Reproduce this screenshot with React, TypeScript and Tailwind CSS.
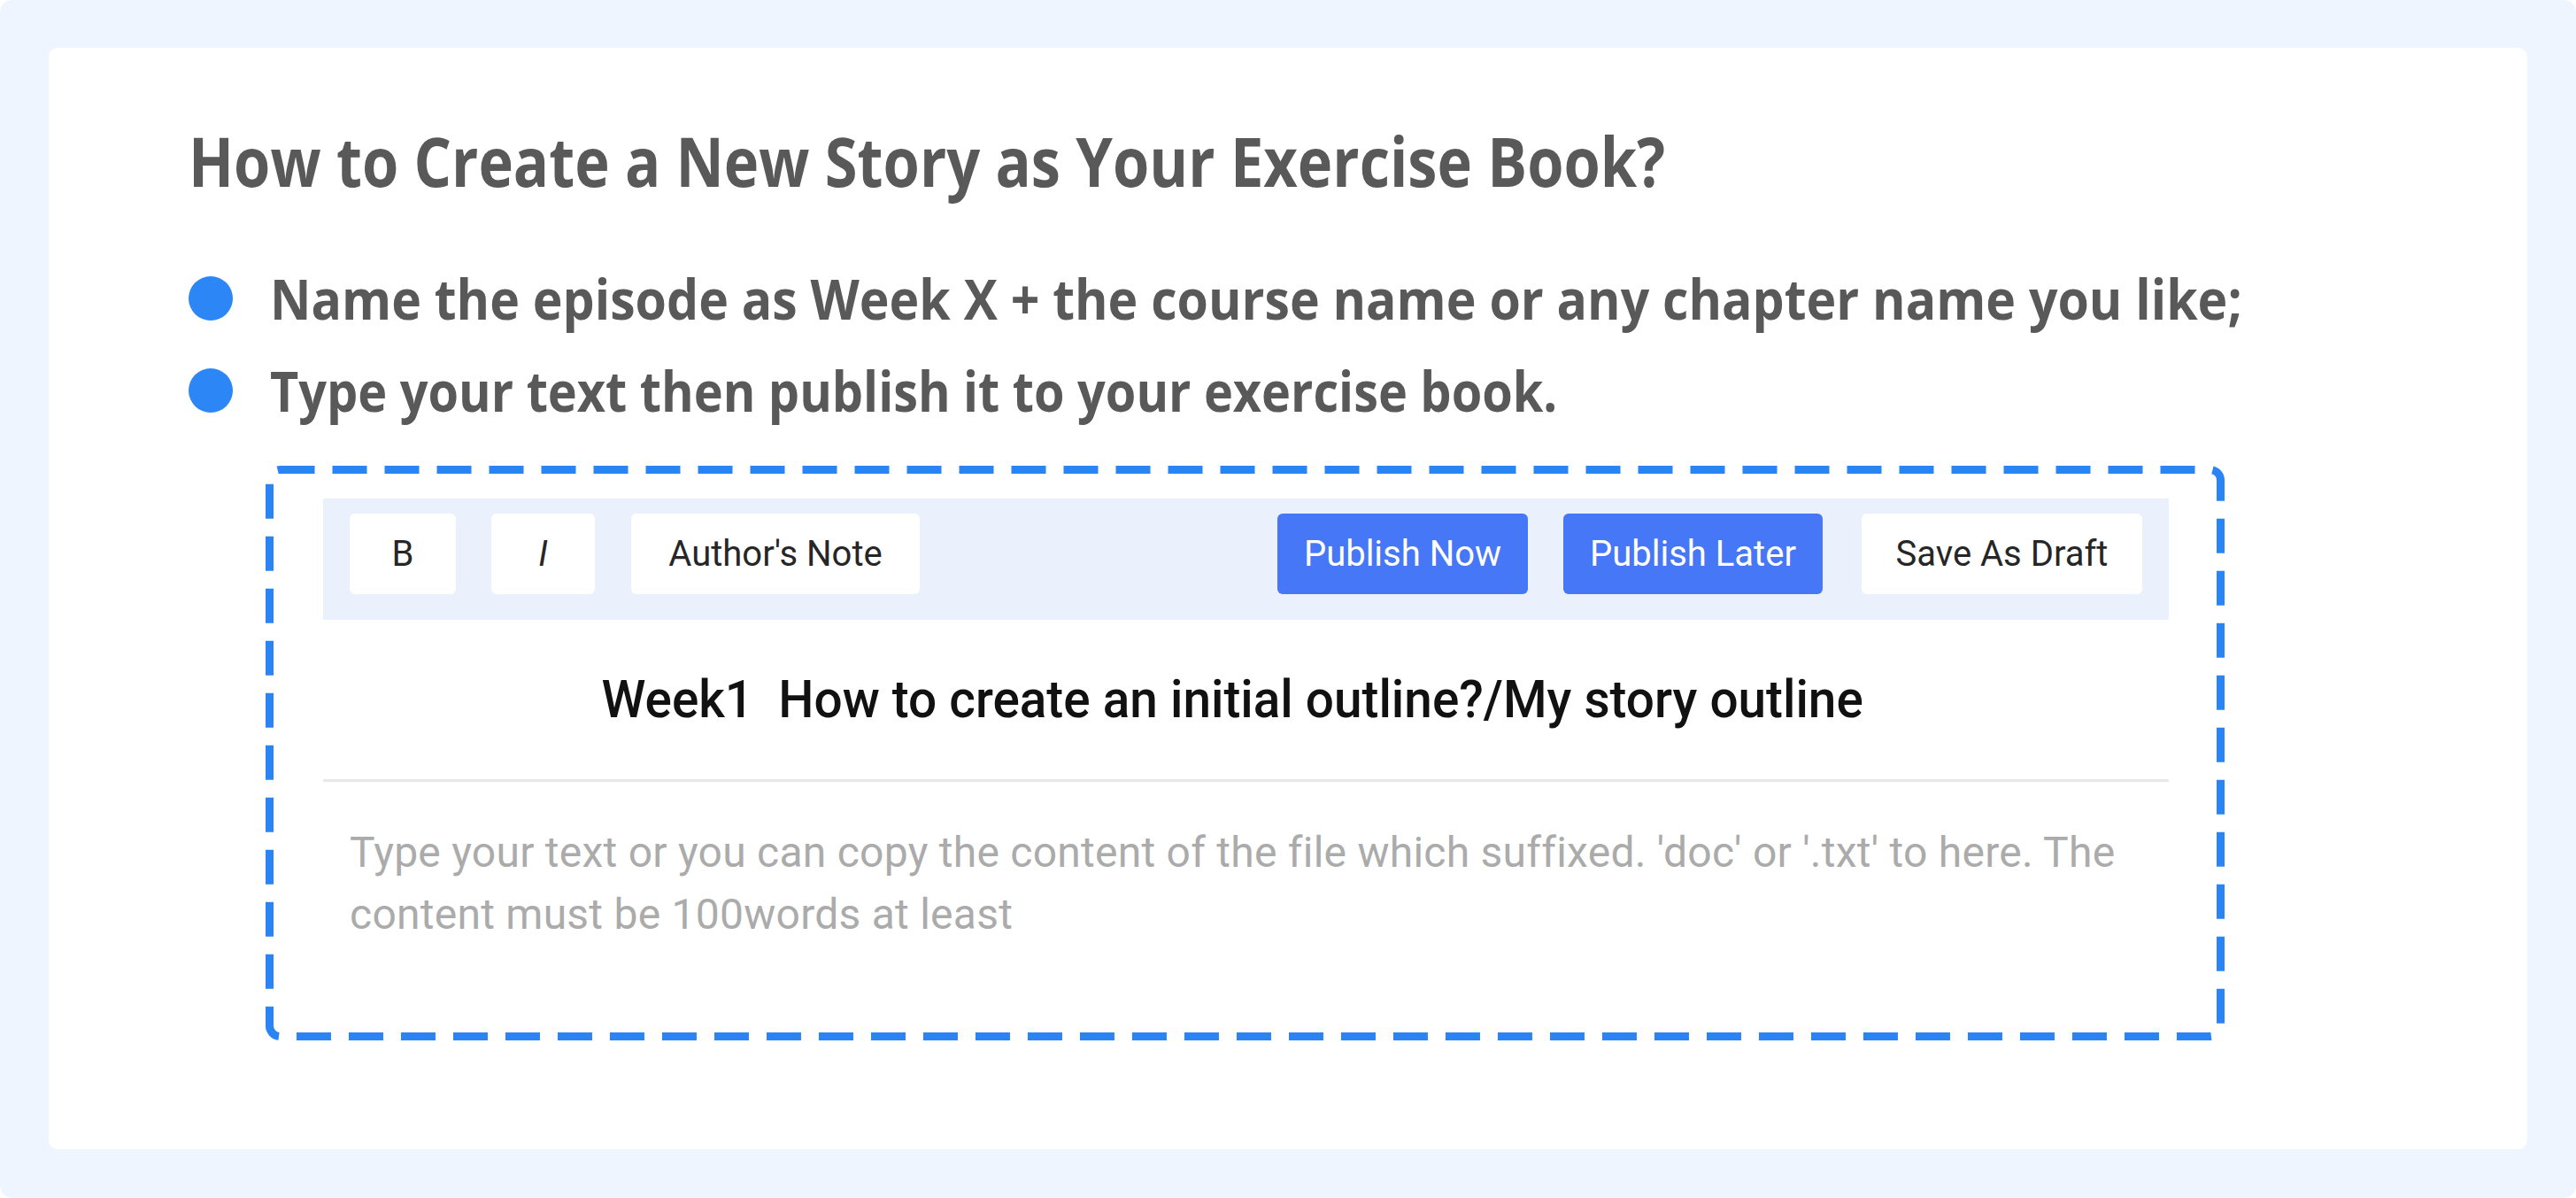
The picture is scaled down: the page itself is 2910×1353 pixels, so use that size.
import React from "react";

function ToolButton({ children, w, primary }: { children: React.ReactNode; w: string; primary?: boolean }) {
  return (
    <div
      className={
        "h-[91px] rounded-[6px] flex items-center justify-center text-[40px] " +
        w +
        (primary ? " bg-[#4677F6] text-white" : " bg-white text-[#262626]")
      }
    >
      {children}
    </div>
  );
}

export default function App() {
  return (
    <div className="w-[2910px] h-[1353px] bg-white">
      <div className="w-full h-full rounded-[14px] bg-[#EEF5FE] pt-[54px] pb-[55px] px-[55px]">
        <div className="h-full rounded-[10px] bg-white pl-[163px] pt-[82px]">
          <h1
            className="-ml-[5px] text-[77px] leading-[92px] font-bold text-[#595959] whitespace-nowrap origin-left scale-x-[0.867]"
            style={{ fontFamily: '"Open Sans", "Noto Sans", sans-serif' }}
          >
            How to Create a New Story as Your Exercise Book?
          </h1>
          <ul
            className="mt-[57px] text-[62px] leading-[104px] font-bold text-[#595959]"
            style={{ fontFamily: '"Open Sans", "Noto Sans", sans-serif' }}
          >
            <li className="flex items-center whitespace-nowrap">
              <span className="-ml-[5px] w-[50px] h-[50px] rounded-full bg-[#2C86F6] mr-[42px] shrink-0" />
              <span className="inline-block origin-left scale-x-[0.922]">
                Name the episode as Week X + the course name or any chapter name you like;
              </span>
            </li>
            <li className="flex items-center whitespace-nowrap">
              <span className="-ml-[5px] w-[50px] h-[50px] rounded-full bg-[#2C86F6] mr-[42px] shrink-0" />
              <span className="inline-block origin-left scale-x-[0.9]">
                Type your text then publish it to your exercise book.
              </span>
            </li>
          </ul>

          <div
            className="relative mt-[33px] ml-[82px] w-[2213px] h-[649px] pt-[37px] pl-[65px] pr-[63px]"
            style={{ fontFamily: 'Roboto, "Liberation Sans", sans-serif' }}
          >
            <svg className="absolute inset-0 pointer-events-none" width="2213" height="649">
              <rect
                x="4.5"
                y="4.5"
                width="2204"
                height="640"
                rx="12"
                fill="none"
                stroke="#2A84F4"
                strokeWidth="9"
                strokeDasharray="39 20"
              />
            </svg>
            <div className="h-[137px] bg-[#EAF1FC] pt-[17px] px-[30px] flex items-start">
              <ToolButton w="w-[120px]">B</ToolButton>
              <div className="ml-[40px]">
                <ToolButton w="w-[117px]">
                  <span className="italic">I</span>
                </ToolButton>
              </div>
              <div className="ml-[41px]">
                <ToolButton w="w-[326px]">Author's Note</ToolButton>
              </div>
              <div className="ml-auto flex gap-[40px]">
                <ToolButton w="w-[283px]" primary>
                  Publish Now
                </ToolButton>
                <ToolButton w="w-[293px]" primary>
                  Publish Later
                </ToolButton>
                <div className="ml-[4px]">
                  <ToolButton w="w-[317px]">Save As Draft</ToolButton>
                </div>
              </div>
            </div>
            <div className="h-[183px] border-b-[3px] border-[#E8E8E8] flex items-center justify-center pr-[30px]">
              <div className="text-[60px] font-medium text-[#111] whitespace-pre scale-x-[0.945]">
                Week1  How to create an initial outline?/My story outline
              </div>
            </div>
            <div className="pt-[45px] px-[30px] text-[48px] leading-[70px] tracking-[0.25px] text-[#ABABAB]">
              Type your text or you can copy the content of the file which suffixed. 'doc' or '.txt' to here. The
              content must be 100words at least
            </div>
          </div>
        </div>
      </div>
    </div>
  );
}
